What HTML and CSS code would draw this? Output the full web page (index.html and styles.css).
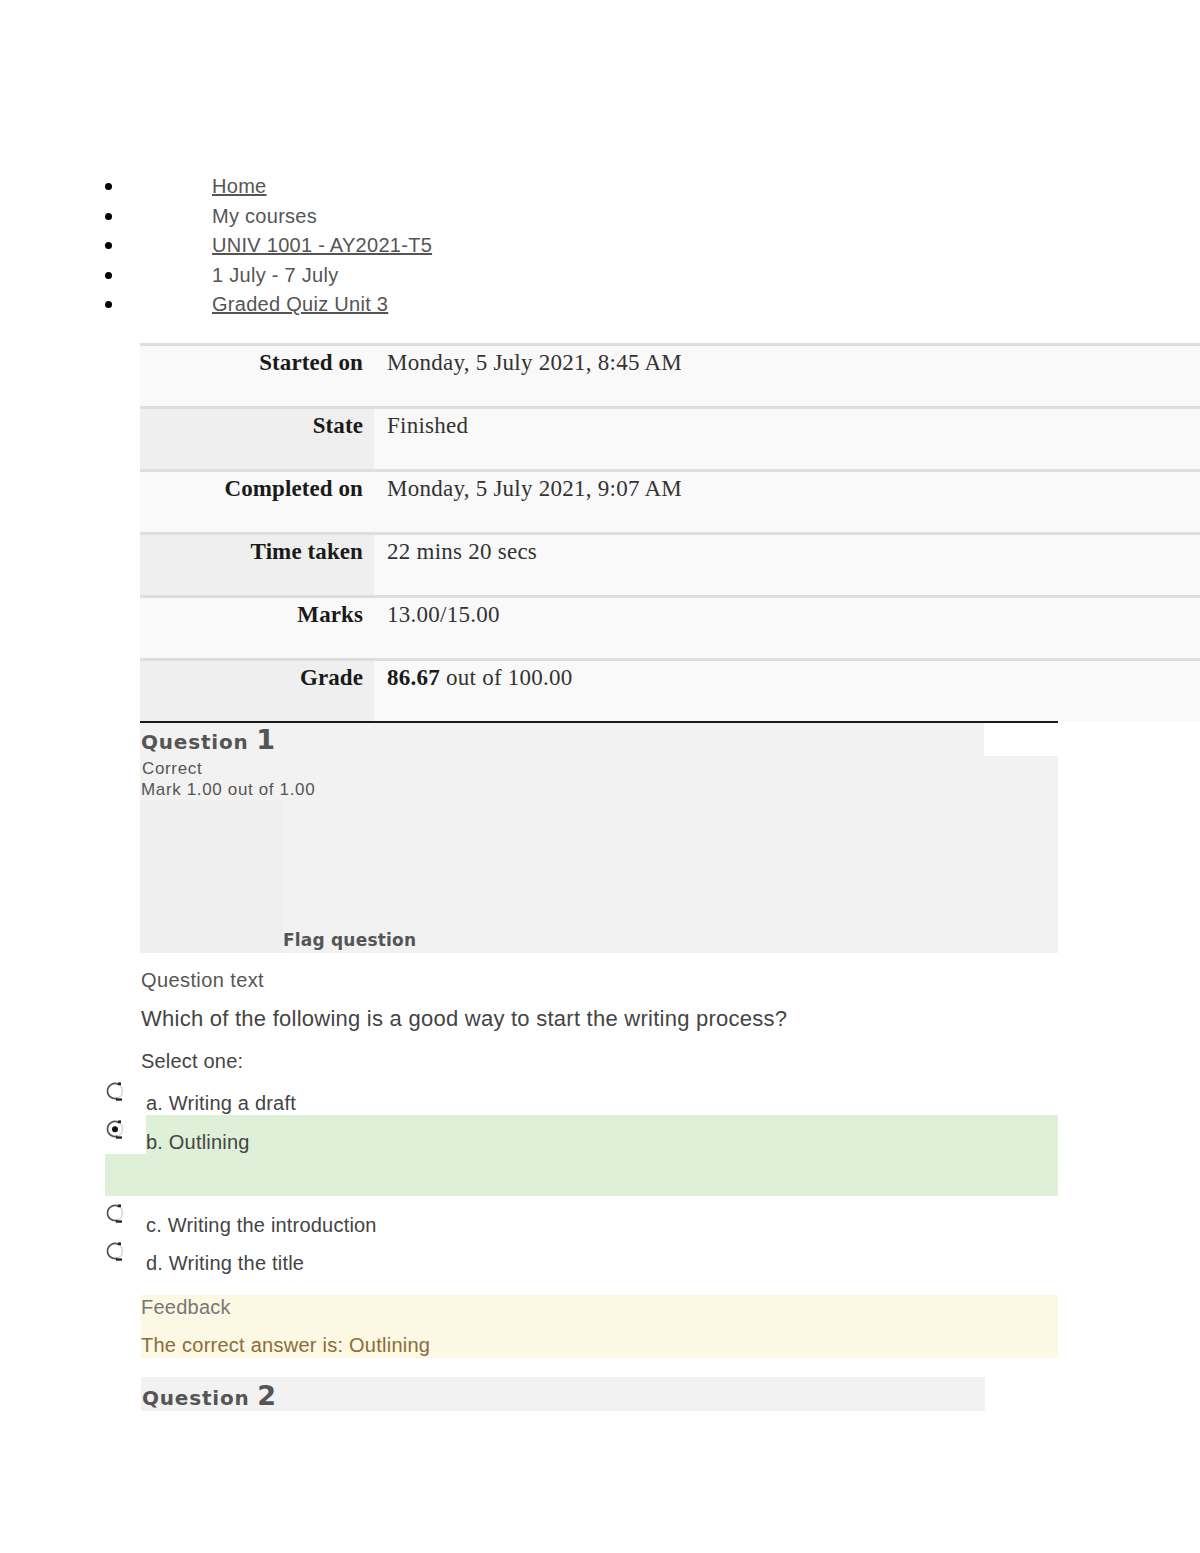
FILE: index.html
```html
<!DOCTYPE html>
<html>
<head>
<meta charset="utf-8">
<title>Graded Quiz Unit 3</title>
<link rel="stylesheet" href="styles.css">
</head>
<body>
<ul class="crumbs">
  <li><span class="dot"></span><a href="#">Home</a></li>
  <li><span class="dot"></span><span>My courses</span></li>
  <li><span class="dot"></span><a href="#">UNIV 1001 - AY2021-T5</a></li>
  <li><span class="dot"></span><span>1 July - 7 July</span></li>
  <li><span class="dot"></span><a href="#">Graded Quiz Unit 3</a></li>
</ul>

<table class="summary">
  <tr class="light"><th>Started on</th><td>Monday, 5 July 2021, 8:45 AM</td></tr>
  <tr class="dark"><th>State</th><td>Finished</td></tr>
  <tr class="light"><th>Completed on</th><td>Monday, 5 July 2021, 9:07 AM</td></tr>
  <tr class="dark"><th>Time taken</th><td>22 mins 20 secs</td></tr>
  <tr class="light"><th>Marks</th><td>13.00/15.00</td></tr>
  <tr class="dark"><th>Grade</th><td><b>86.67</b> out of 100.00</td></tr>
</table>

<div class="que">
  <div class="qno">Question <span class="num">1</span></div>
  <div class="info">
    <div class="state">Correct</div>
    <div class="grade">Mark 1.00 out of 1.00</div>
    <div class="flagrow">
      <div class="flagside"></div>
      <div class="flag">Flag question</div>
    </div>
  </div>

  <div class="qtext-label">Question text</div>
  <div class="qtext">Which of the following is a good way to start the writing process?</div>
  <div class="prompt">Select one:</div>
</div>

<div class="answer">
  <div class="opt">
    <svg class="radio" viewBox="0 0 20 22" width="20" height="22"><path d="M13.5 4.4 A7.5 7.5 0 0 1 12.5 18.1" stroke="#d6d6d6" stroke-width="1.4" fill="none"/><path d="M13.5 4.4 A7.5 7.5 0 1 0 12.5 18.1" stroke="#555" stroke-width="1.7" fill="none"/><rect x="13" y="2.4" width="3" height="2.8" fill="#222"/><rect x="11" y="18.4" width="6" height="2.3" fill="#222"/></svg>
    <div class="opt-label">a. Writing a draft</div>
  </div>
  <div class="opt">
    <svg class="radio" viewBox="0 0 20 22" width="20" height="22"><path d="M13.5 4.4 A7.5 7.5 0 0 1 12.5 18.1" stroke="#d6d6d6" stroke-width="1.4" fill="none"/><path d="M13.5 4.4 A7.5 7.5 0 1 0 12.5 18.1" stroke="#555" stroke-width="1.7" fill="none"/><rect x="13" y="2.4" width="3" height="2.8" fill="#222"/><rect x="11" y="18.4" width="6" height="2.3" fill="#222"/><circle cx="10" cy="11.2" r="3" fill="#111"/></svg>
    <div class="opt-label correct">b. Outlining</div>
  </div>
  <div class="correct-fill"></div>
  <div class="opt opt-c">
    <svg class="radio" viewBox="0 0 20 22" width="20" height="22"><path d="M13.5 4.4 A7.5 7.5 0 0 1 12.5 18.1" stroke="#d6d6d6" stroke-width="1.4" fill="none"/><path d="M13.5 4.4 A7.5 7.5 0 1 0 12.5 18.1" stroke="#555" stroke-width="1.7" fill="none"/><rect x="13" y="2.4" width="3" height="2.8" fill="#222"/><rect x="11" y="18.4" width="6" height="2.3" fill="#222"/></svg>
    <div class="opt-label">c. Writing the introduction</div>
  </div>
  <div class="opt">
    <svg class="radio" viewBox="0 0 20 22" width="20" height="22"><path d="M13.5 4.4 A7.5 7.5 0 0 1 12.5 18.1" stroke="#d6d6d6" stroke-width="1.4" fill="none"/><path d="M13.5 4.4 A7.5 7.5 0 1 0 12.5 18.1" stroke="#555" stroke-width="1.7" fill="none"/><rect x="13" y="2.4" width="3" height="2.8" fill="#222"/><rect x="11" y="18.4" width="6" height="2.3" fill="#222"/></svg>
    <div class="opt-label">d. Writing the title</div>
  </div>
</div>

<div class="feedback">
  <div class="fb-label">Feedback</div>
  <div class="fb-answer">The correct answer is: Outlining</div>
</div>

<div class="qno qno2">Question <span class="num">2</span></div>
</body>
</html>
```

FILE: styles.css
```css
html, body {
  margin: 0;
  padding: 0;
  background: #ffffff;
  overflow-x: hidden;
}

body {
  font-family: "Liberation Sans", Arial, sans-serif;
  color: #333;
}

.crumbs {
  list-style: none;
  margin: 172px 0 0 0;
  padding: 0 0 0 105px;
  font-size: 20px;
  line-height: 29.5px;
  letter-spacing: 0.28px;
  color: #555;
}

.crumbs li {
  display: flex;
  align-items: center;
}

.crumbs .dot {
  width: 7px;
  height: 7px;
  border-radius: 50%;
  background: #000;
  margin-right: 100px;
  flex: none;
}

.crumbs a {
  color: #555;
  text-decoration: underline;
}

.summary {
  margin: 23px 0 0 140px;
  width: 1060px;
  border-collapse: separate;
  border-spacing: 0;
  font-family: "Liberation Serif", "Times New Roman", serif;
  font-size: 23px;
  line-height: 26px;
}

.summary th,
.summary td {
  border-top: 3px solid #dedede;
  padding-top: 4px;
  padding-bottom: 30px;
  vertical-align: top;
  background: #f9f9f9;
}

.summary th {
  width: 222px;
  text-align: right;
  padding-right: 11px;
  font-weight: bold;
  color: #1a1a1a;
  letter-spacing: 0.1px;
}

.summary tr.dark th {
  background: #efefef;
}

.summary td {
  padding-left: 13px;
  color: #333;
  letter-spacing: 0.25px;
}

.summary td b {
  color: #1a1a1a;
}

.que {
  margin-left: 140px;
  width: 918px;
  border-top: 2px solid #1a1a1a;
}

.qno {
  width: 843px;
  height: 33px;
  padding-left: 1px;
  background: #f2f2f2;
  font-family: "DejaVu Sans", Verdana, sans-serif;
  font-weight: bold;
  font-size: 20px;
  line-height: 34px;
  letter-spacing: 0.8px;
  color: #555;
}

.qno .num {
  font-size: 27px;
  letter-spacing: 0;
}

.info {
  background: #f2f2f2;
  height: 197px;
  display: flex;
  flex-direction: column;
  font-size: 17px;
  letter-spacing: 0.65px;
  line-height: 21px;
  color: #555;
}

.info .state {
  margin-top: 2px;
  padding-left: 2px;
}

.info .grade {
  padding-left: 1px;
}

.flagrow {
  flex: 1;
  display: flex;
}

.flagside {
  width: 143px;
  background: #efefef;
}

.flag {
  flex: 1;
  align-self: flex-end;
  padding-bottom: 1px;
  font-family: "DejaVu Sans", Verdana, sans-serif;
  font-weight: bold;
  font-size: 17px;
  letter-spacing: 0.2px;
  line-height: 24px;
  color: #555;
}

.qtext-label {
  margin-top: 15px;
  font-size: 20px;
  line-height: 24px;
  color: #555;
  letter-spacing: 0.4px;
  padding-left: 1px;
}

.qtext {
  margin-top: 13px;
  font-size: 22px;
  line-height: 28px;
  color: #444;
  letter-spacing: 0.25px;
  padding-left: 1px;
}

.prompt {
  margin-top: 16px;
  font-size: 20px;
  line-height: 24px;
  color: #444;
  letter-spacing: 0.2px;
  padding-left: 1px;
}

.answer {
  margin-top: 4px;
  margin-left: 105px;
  width: 953px;
}

.opt {
  display: flex;
  align-items: flex-start;
}

.opt-c {
  margin-top: 3px;
}

.radio {
  flex: none;
  margin-top: 3px;
  margin-left: 0;
}

.opt-label {
  flex: 1;
  margin-left: 21px;
  padding-top: 14px;
  font-size: 20px;
  line-height: 24px;
  color: #444;
  letter-spacing: 0.2px;
}

.opt-label.correct {
  background: #dff0d8;
  padding-top: 15px;
}

.correct-fill {
  height: 42px;
  background: #dff0d8;
}

.feedback {
  margin: 20px 0 0 141px;
  width: 917px;
  height: 63px;
  background: #fcf8e3;
  font-size: 20px;
  line-height: 24px;
  letter-spacing: 0.25px;
}

.fb-label {
  color: #777;
}

.fb-answer {
  margin-top: 14px;
  color: #8a6d3b;
}

.qno2 {
  margin: 19px 0 0 141px;
  height: 34px;
  line-height: 38px;
}
```
